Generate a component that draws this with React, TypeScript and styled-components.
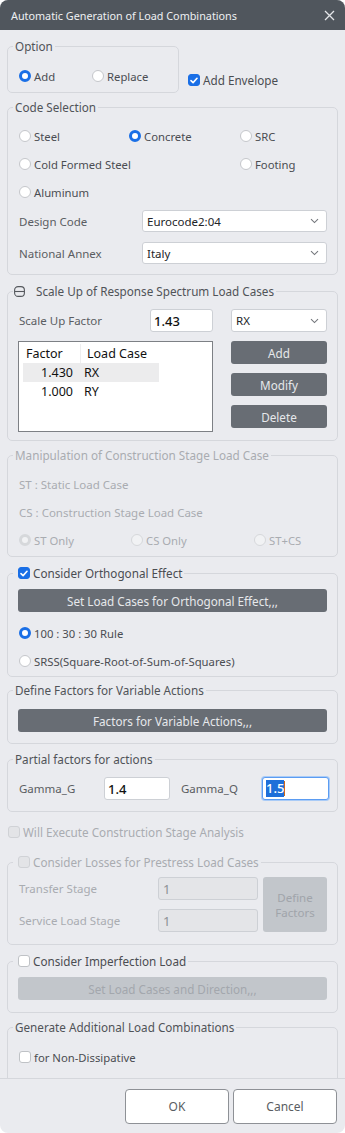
import styled, {createGlobalStyle} from "styled-components";

const GlobalStyle = createGlobalStyle`
	html, body {
		margin: 0;
		padding: 0;
		background: #ffffff;
	}
	* {
		box-sizing: border-box;
	}
	body {
		font-family: "Noto Sans", "Liberation Sans", sans-serif;
		font-size: 11.5px;
		color: #4a4d52;
	}
`

const Dialog = styled.div`
	width: 345px;
	height: 1133px;
	background: #eaebef;
	border-radius: 8px;
	overflow: hidden;
	display: flex;
	flex-direction: column;
`
const TitleBar = styled.div`
	height: 30px;
	flex: none;
	background: #50565d;
	color: #eef0f2;
	font-size: 10.8px;
	display: flex;
	align-items: center;
	justify-content: space-between;
	padding: 0 10px 0 11px;
`
const Body = styled.div`
	flex: 1;
	overflow: hidden;
	padding: 8px 7px 0;
	display: flex;
	flex-direction: column;
`
const Footer = styled.div`
	height: 55px;
	flex: none;
	border-top: 1px solid #d5d7dc;
	padding: 10px 8px 0;
	display: flex;
	justify-content: flex-end;
	gap: 4px;
`
const FooterButton = styled.button<{$w: number}>`
	width: ${p => p.$w}px;
	height: 35px;
	background: #ffffff;
	border: 1px solid #8e9196;
	border-radius: 4px;
	font-family: inherit;
	font-size: 12px;
	color: #5a5d62;
`
const Group = styled.fieldset<{$mt: number, $pt: number, $pb: number, $w?: number}>`
	margin: ${p => p.$mt}px 0 0;
	padding: ${p => p.$pt}px 10px ${p => p.$pb}px;
	border: 1px solid #d5d7dc;
	border-radius: 5px;
	min-width: 0;
	${p => p.$w ? `width: ${p.$w}px; flex: none;` : ""}
`
const Legend = styled.legend<{$disabled?: boolean}>`
	padding: 0 2px;
	margin-left: -5px;
	line-height: 16px;
	font-size: 11.7px;
	color: ${p => p.$disabled ? "#a9acb1" : "#505358"};
	display: flex;
	align-items: center;
`
const OptionRow = styled.div`
	display: flex;
	align-items: flex-end;
`
const Item = styled.label<{$disabled?: boolean}>`
	display: inline-flex;
	align-items: center;
	gap: 3px;
	height: 16px;
	font-size: 11.3px;
	white-space: nowrap;
	color: ${p => p.$disabled ? "#a9acb1" : "#4a4d52"};
`
const Radio = styled.span<{$on?: boolean, $disabled?: boolean}>`
	width: 12px;
	height: 12px;
	border-radius: 50%;
	flex: none;
	background: ${p => p.$disabled ? "#f1f2f4" : "#ffffff"};
	border: ${p => p.$on
		? `3.5px solid ${p.$disabled ? "#d6d8db" : "#1a6fe6"}`
		: `1px solid ${p.$disabled ? "#d6d8db" : "#c5c7cb"}`};
`
const Box = styled.span<{$on?: boolean, $disabled?: boolean}>`
	width: 12px;
	height: 12px;
	border-radius: 3px;
	flex: none;
	display: flex;
	align-items: center;
	justify-content: center;
	background: ${p => p.$on ? "#1a6fe6" : p.$disabled ? "#e3e4e7" : "#ffffff"};
	border: 1px solid ${p => p.$on ? "#1a6fe6" : p.$disabled ? "#d0d2d6" : "#bfc2c6"};
`
const EnvelopeItem = styled(Item)`
	margin: 0 0 5px 9px;
	font-size: 11.7px;
`
const LegendItem = styled(Item)`
	margin-left: 3px;
	font-size: 11.7px;
`
const WillExecute = styled(Item)`
	margin: 12px 0 0 1px;
	font-size: 11.7px;
`
const RadioGrid = styled.div<{$cols: string, $row?: number}>`
	display: grid;
	grid-template-columns: ${p => p.$cols};
	grid-auto-rows: ${p => p.$row ?? 28}px;
	align-items: center;
	padding-left: 1px;
`
const Spacer = styled.div``
const FieldRow = styled.div<{$mt: number}>`
	display: grid;
	grid-template-columns: 124px 1fr;
	align-items: center;
	margin-top: ${p => p.$mt}px;
`
const Label = styled.span<{$disabled?: boolean}>`
	padding-left: 1px;
	font-size: 11.5px;
	white-space: nowrap;
	color: ${p => p.$disabled ? "#a9acb1" : "#5a5d62"};
`
const NoteLabel = styled(Label)`
	grid-column: 1 / -1;
	padding-left: 0;
`
const Select = styled.div<{$h: number}>`
	height: ${p => p.$h}px;
	background: #ffffff;
	border: 1px solid #cdd0d5;
	border-radius: 3px;
	padding: 0 7px 0 4px;
	display: flex;
	align-items: center;
	justify-content: space-between;
	font-size: 11.5px;
	color: #222428;
`
const TextInput = styled.input<{$w: number}>`
	width: ${p => p.$w}px;
	height: 23px;
	background: #ffffff;
	border: 1px solid #cdd0d5;
	border-radius: 3px;
	padding: 0 3px;
	font-family: inherit;
	font-size: 13px;
	font-weight: 500;
	color: #111111;
	outline: none;
`
const DisabledInput = styled.input`
	width: 100px;
	height: 23px;
	background: #e4e5e8;
	border: 1px solid #cdd0d5;
	border-radius: 3px;
	padding: 0 4px;
	font-family: inherit;
	font-size: 13px;
	color: #8d9096;
`
const FocusedInput = styled.div`
	width: 67px;
	height: 23px;
	background: #ffffff;
	border: 1px solid #5b9cf2;
	box-shadow: 0 0 0 1px #a9cbf7;
	border-radius: 3px;
	padding: 0 3px;
	display: flex;
	align-items: center;
	font-size: 13px;
	font-weight: 500;
`
const Selected = styled.span`
	background: #1e6fd9;
	color: #ffffff;
	line-height: 17px;
`
const Caret = styled.span`
	width: 1px;
	height: 15px;
	background: #d06a1a;
`
const ScaleGrid = styled.div`
	display: grid;
	grid-template-columns: 195px 1fr;
	column-gap: 18px;
	row-gap: 9px;
`
const FactorRow = styled.div`
	display: flex;
	align-items: center;
	justify-content: space-between;
`
const ListBox = styled.div`
	height: 91px;
	background: #ffffff;
	border: 1px solid #7d8085;
	padding: 2px 0 0 4px;
`
const ListRow = styled.div<{$sel?: boolean}>`
	width: 136px;
	height: 19px;
	display: grid;
	grid-template-columns: 57px 79px;
	align-items: center;
	font-size: 12.5px;
	color: #111111;
	background: ${p => p.$sel ? "#ececed" : "#ffffff"};
`
const HeadCell = styled.span<{$line?: boolean}>`
	padding-left: ${p => p.$line ? 6 : 3}px;
	height: 100%;
	display: flex;
	align-items: center;
	border-left: ${p => p.$line ? "1px solid #eeeeef" : "none"};
`
const NumCell = styled.span`
	text-align: right;
	padding-right: 7px;
`
const NameCell = styled.span`
	padding-left: 4px;
`
const ButtonStack = styled.div`
	display: flex;
	flex-direction: column;
	gap: 9px;
`
const DarkButton = styled.button<{$disabled?: boolean}>`
	width: 100%;
	height: 23px;
	border: none;
	border-radius: 3px;
	background: ${p => p.$disabled ? "#c2c6cb" : "#686d74"};
	color: ${p => p.$disabled ? "#a3a7ad" : "#e6e8eb"};
	font-family: inherit;
	font-size: 11.7px;
	padding: 0;
`
const WideButton = styled(DarkButton)`
	display: block;
	margin-bottom: 7px;
`
const GammaRow = styled.div`
	display: grid;
	grid-template-columns: 85px 66px 92px 67px;
	align-items: center;
	padding-left: 1px;
`
const GammaLabel = styled(Label)<{$gap?: boolean}>`
	padding-left: ${p => p.$gap ? 11 : 0}px;
`
const LossGrid = styled.div`
	display: grid;
	grid-template-columns: 140px 100px 1fr;
	grid-template-rows: 23px 23px;
	row-gap: 9px;
	align-items: center;
`
const DefineButton = styled.div`
	grid-column: 3;
	grid-row: 1 / span 2;
	margin-left: 5px;
	align-self: stretch;
	background: #c2c6cb;
	color: #a0a4aa;
	border-radius: 3px;
	display: flex;
	flex-direction: column;
	align-items: center;
	justify-content: center;
	font-size: 11.5px;
	line-height: 15px;
`
const CollapseIcon = styled.svg`
	margin: 0 11px 0 -1px;
	flex: none;
`

const Check = () => (
	<svg width="8" height="7" viewBox="0 0 8 7">
		<path d="M1 3.6 L3.1 5.6 L7 1.3" fill="none" stroke="#ffffff" strokeWidth="1.6" strokeLinecap="round" strokeLinejoin="round"/>
	</svg>
)

const Chevron = () => (
	<svg width="9" height="6" viewBox="0 0 9 6">
		<path d="M1 1.2 L4.5 4.6 L8 1.2" fill="none" stroke="#74777c" strokeWidth="1.1"/>
	</svg>
)

const RadioItem = (props: {label: string, on?: boolean, disabled?: boolean}) => (
	<Item $disabled={props.disabled}>
		<Radio $on={props.on} $disabled={props.disabled}/>
		{props.label}
	</Item>
)

export default function App() {
	return (
		<Dialog>
			<GlobalStyle/>
			<TitleBar>
				<span>Automatic Generation of Load Combinations</span>
				<svg width="11" height="11" viewBox="0 0 11 11">
					<path d="M1 1 L10 10 M10 1 L1 10" stroke="#e4e6e9" strokeWidth="1.3"/>
				</svg>
			</TitleBar>
			<Body>
				<OptionRow>
					<Group $mt={0} $pt={14} $pb={8} $w={172}>
						<Legend>Option</Legend>
						<RadioGrid $cols="73px 1fr" $row={16}>
							<RadioItem label="Add" on/>
							<RadioItem label="Replace"/>
						</RadioGrid>
					</Group>
					<EnvelopeItem>
						<Box $on><Check/></Box>
						Add Envelope
					</EnvelopeItem>
				</OptionRow>

				<Group $mt={6} $pt={7} $pb={10}>
					<Legend>Code Selection</Legend>
					<RadioGrid $cols="110px 111px 1fr">
						<RadioItem label="Steel"/>
						<RadioItem label="Concrete" on/>
						<RadioItem label="SRC"/>
						<RadioItem label="Cold Formed Steel"/>
						<Spacer/>
						<RadioItem label="Footing"/>
						<RadioItem label="Aluminum"/>
					</RadioGrid>
					<FieldRow $mt={4}>
						<Label>Design Code</Label>
						<Select $h={22}>Eurocode2:04<Chevron/></Select>
					</FieldRow>
					<FieldRow $mt={10}>
						<Label>National Annex</Label>
						<Select $h={22}>Italy<Chevron/></Select>
					</FieldRow>
				</Group>

				<Group $mt={8} $pt={10} $pb={8}>
					<Legend>
						<CollapseIcon width="11" height="11" viewBox="0 0 11 11">
							<rect x="0.6" y="0.6" width="9.8" height="9.8" rx="3.5" fill="none" stroke="#55585d" strokeWidth="1.1"/>
							<path d="M0.6 5.5 H10.4" stroke="#55585d" strokeWidth="1.1"/>
						</CollapseIcon>
						Scale Up of Response Spectrum Load Cases
					</Legend>
					<ScaleGrid>
						<FactorRow>
							<Label>Scale Up Factor</Label>
							<TextInput $w={63} defaultValue="1.43" readOnly/>
						</FactorRow>
						<Select $h={23}>RX<Chevron/></Select>
						<ListBox>
							<ListRow>
								<HeadCell>Factor</HeadCell>
								<HeadCell $line>Load Case</HeadCell>
							</ListRow>
							<ListRow $sel>
								<NumCell>1.430</NumCell>
								<NameCell>RX</NameCell>
							</ListRow>
							<ListRow>
								<NumCell>1.000</NumCell>
								<NameCell>RY</NameCell>
							</ListRow>
						</ListBox>
						<ButtonStack>
							<DarkButton>Add</DarkButton>
							<DarkButton>Modify</DarkButton>
							<DarkButton>Delete</DarkButton>
						</ButtonStack>
					</ScaleGrid>
				</Group>

				<Group $mt={6} $pt={7} $pb={2}>
					<Legend $disabled>Manipulation of Construction Stage Load Case</Legend>
					<RadioGrid $cols="112px 123px 1fr">
						<NoteLabel $disabled>ST : Static Load Case</NoteLabel>
						<NoteLabel $disabled>CS : Construction Stage Load Case</NoteLabel>
						<RadioItem label="ST Only" on disabled/>
						<RadioItem label="CS Only" disabled/>
						<RadioItem label="ST+CS" disabled/>
					</RadioGrid>
				</Group>

				<Group $mt={8} $pt={8} $pb={1}>
					<Legend>
						<LegendItem>
							<Box $on><Check/></Box>
							Consider Orthogonal Effect
						</LegendItem>
					</Legend>
					<WideButton>Set Load Cases for Orthogonal Effect,,,</WideButton>
					<RadioGrid $cols="1fr">
						<RadioItem label="100 : 30 : 30 Rule" on/>
						<RadioItem label="SRSS(Square-Root-of-Sum-of-Squares)"/>
					</RadioGrid>
				</Group>

				<Group $mt={5} $pt={11} $pb={11}>
					<Legend>Define Factors for Variable Actions</Legend>
					<DarkButton>Factors for Variable Actions,,,</DarkButton>
				</Group>

				<Group $mt={7} $pt={10} $pb={11}>
					<Legend>Partial factors for actions</Legend>
					<GammaRow>
						<GammaLabel>Gamma_G</GammaLabel>
						<TextInput $w={66} defaultValue="1.4" readOnly/>
						<GammaLabel $gap>Gamma_Q</GammaLabel>
						<FocusedInput>
							<Selected>1.5</Selected>
							<Caret/>
						</FocusedInput>
					</GammaRow>
				</Group>

				<WillExecute $disabled>
					<Box $disabled/>
					Will Execute Construction Stage Analysis
				</WillExecute>

				<Group $mt={14} $pt={7} $pb={12}>
					<Legend>
						<LegendItem $disabled>
							<Box $disabled/>
							Consider Losses for Prestress Load Cases
						</LegendItem>
					</Legend>
					<LossGrid>
						<Label $disabled>Transfer Stage</Label>
						<DisabledInput defaultValue="1" readOnly/>
						<DefineButton>
							<span>Define</span>
							<span>Factors</span>
						</DefineButton>
						<Label $disabled>Service Load Stage</Label>
						<DisabledInput defaultValue="1" readOnly/>
					</LossGrid>
				</Group>

				<Group $mt={8} $pt={8} $pb={12}>
					<Legend>
						<LegendItem>
							<Box/>
							Consider Imperfection Load
						</LegendItem>
					</Legend>
					<DarkButton $disabled>Set Load Cases and Direction,,,</DarkButton>
				</Group>

				<Group $mt={6} $pt={14} $pb={20}>
					<Legend>Generate Additional Load Combinations</Legend>
					<RadioGrid $cols="1fr" $row={16}>
						<Item>
							<Box/>
							for Non-Dissipative
						</Item>
					</RadioGrid>
				</Group>
			</Body>
			<Footer>
				<FooterButton $w={104}>OK</FooterButton>
				<FooterButton $w={104}>Cancel</FooterButton>
			</Footer>
		</Dialog>
	)
}
